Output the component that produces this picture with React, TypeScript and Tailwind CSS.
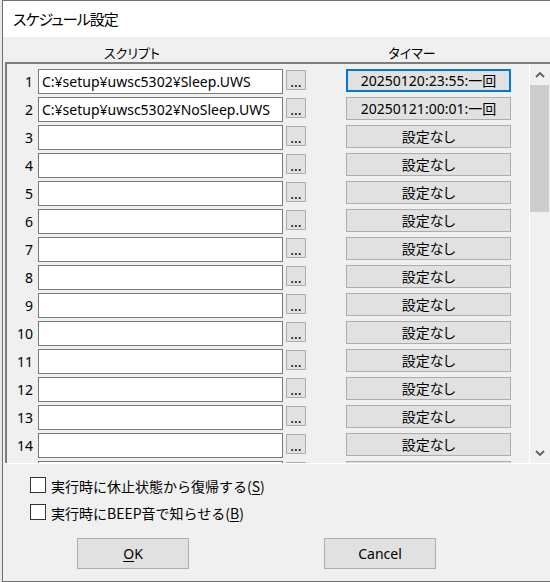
import React from 'react';

const jp = "font-['Noto_Sans_CJK_JP',sans-serif]";
const latin = "font-['Noto_Sans','Noto_Sans_CJK_JP',sans-serif]";

const rows: { path: string; timer: string }[] = [
  { path: 'C:¥setup¥uwsc5302¥Sleep.UWS', timer: '20250120:23:55:一回' },
  { path: 'C:¥setup¥uwsc5302¥NoSleep.UWS', timer: '20250121:00:01:一回' },
];

const Chevron = ({ down }: { down?: boolean }) => (
  <svg width="10" height="6" viewBox="0 0 10 6">
    <polyline
      points={down ? '1,1 5,5 9,1' : '1,5 5,1 9,5'}
      fill="none"
      stroke="#606060"
      strokeWidth="1.8"
    />
  </svg>
);

// the last row sits mostly below the visible part of the list, only its top edge shows
const ScheduleRow = ({ index, hidden }: { index: number; hidden?: boolean }) => {
  const row = rows[index - 1];
  const first = index === 1;
  return (
    <div className="flex h-[28px] shrink-0 items-start">
      <div className={`w-[26px] h-[25px] flex items-center justify-end text-[14px] text-black ${latin}`}>
        {hidden ? '' : index}
      </div>
      <div
        className={`ml-[5px] w-[245px] h-[25px] shrink-0 bg-white border border-[#7a7a7a] pl-[3px] flex items-center text-[14px] text-black whitespace-nowrap overflow-hidden ${latin}`}
      >
        {row ? row.path : ''}
      </div>
      <div
        className={`ml-[3px] mt-[1px] w-[20px] h-[20px] shrink-0 bg-[#e1e1e1] border border-[#adadad] text-center pt-[2px] leading-[18px] text-[14px] text-black ${latin}`}
      >
        {hidden ? '' : '...'}
      </div>
      <div
        className={`ml-[40px] w-[165px] h-[23px] shrink-0 bg-[#e1e1e1] flex items-center justify-center text-[14px] text-black whitespace-nowrap ${
          first ? 'border-2 border-[#0078d7]' : 'border border-[#adadad]'
        } ${row ? latin : `${jp} [font-feature-settings:'palt']`}`}
      >
        {row ? row.timer : hidden ? '' : '設定なし'}
      </div>
    </div>
  );
};

const CheckRow = ({ label, keyChar }: { label: string; keyChar: string }) => (
  <div className="flex items-center h-[17px]">
    <div className="w-[16px] h-[16px] bg-white border border-[#333333] shrink-0" />
    <span className={`ml-[5px] pt-[3px] text-[14px] text-black whitespace-nowrap ${jp}`}>
      {label}(<span className="underline underline-offset-2">{keyChar}</span>)
    </span>
  </div>
);

export default function App() {
  return (
    <div className="w-[550px] h-[582px] bg-[#e9e9e9] pl-[2px] overflow-hidden">
      <div className="h-full flex flex-col border-l border-t border-b border-[#6f6f6f] bg-[#f0f0f0]">
        {/* title bar */}
        <div className={`h-[36px] shrink-0 bg-white flex items-center pl-[10px] text-[15px] text-black tracking-[-1px] [font-feature-settings:'palt'] ${jp}`}>
          スケジュール設定
        </div>

        {/* column headers */}
        <div className={`h-[25px] shrink-0 flex items-end text-[13px] leading-[18px] text-black [font-feature-settings:'palt'] ${jp}`}>
          <div className="w-[258px] text-center">スクリプト</div>
          <div className="ml-[36px] w-[230px] text-center">タイマー</div>
        </div>

        {/* scrolling list */}
        <div className="ml-[2px] h-[401px] shrink-0 flex border-t-2 border-l-2 border-[#7c7c7c] overflow-hidden">
          <div className="flex-1 flex flex-col pt-[5px] overflow-hidden">
            {Array.from({ length: 15 }, (_, i) => (
              <ScheduleRow key={i} index={i + 1} hidden={i === 14} />
            ))}
          </div>
          <div className="w-[21px] shrink-0 border-l border-white flex flex-col">
            <div className="h-[21px] flex items-center justify-center pr-[1px]">
              <Chevron />
            </div>
            <div className="h-[127px] w-[19px] bg-[#cdcdcd]" />
            <div className="flex-1" />
            <div className="h-[21px] flex items-center justify-center pr-[1px]">
              <Chevron down />
            </div>
          </div>
        </div>

        {/* options and buttons */}
        <div className="flex-1 border-t border-white flex flex-col pl-[27px] pt-[12px]">
          <div className="flex flex-col gap-[10px]">
            <CheckRow label="実行時に休止状態から復帰する" keyChar="S" />
            <CheckRow label="実行時にBEEP音で知らせる" keyChar="B" />
          </div>
          <div className={`mt-[18px] ml-[47px] flex gap-[135px] text-[14px] text-black ${latin}`}>
            <div className="w-[112px] h-[31px] bg-[#e1e1e1] border border-[#adadad] flex items-center justify-center">
              <span>
                <span className="underline underline-offset-2">O</span>K
              </span>
            </div>
            <div className="w-[112px] h-[31px] bg-[#e1e1e1] border border-[#adadad] flex items-center justify-center">
              Cancel
            </div>
          </div>
        </div>
      </div>
    </div>
  );
}
